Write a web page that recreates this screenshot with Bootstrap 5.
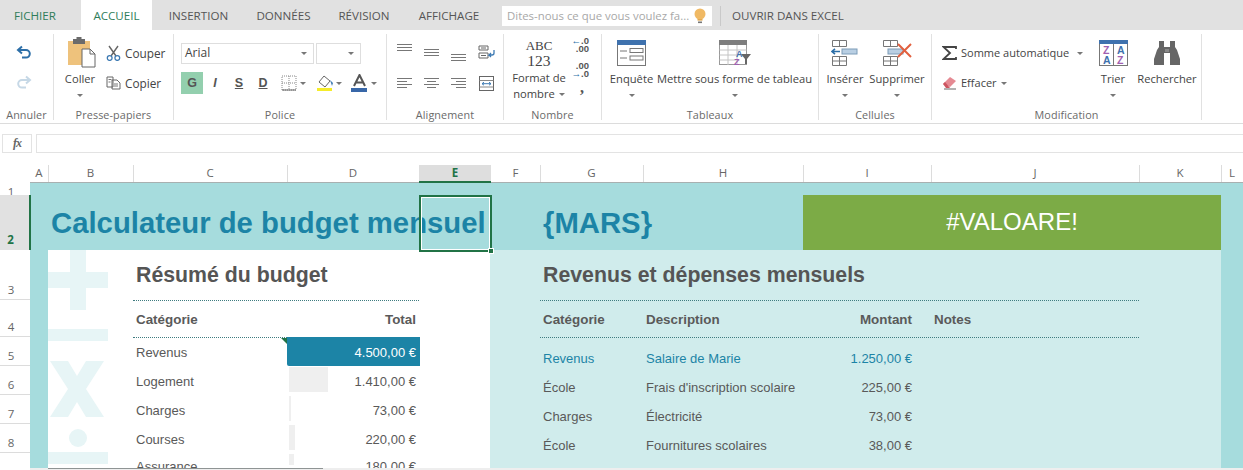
<!DOCTYPE html>
<html lang="fr">
<head>
<meta charset="utf-8">
<title>Calculateur de budget mensuel</title>
<link href="https://cdn.jsdelivr.net/npm/bootstrap@5.3.0/dist/css/bootstrap.min.css" rel="stylesheet">
<style>
html,body{margin:0;height:470px;overflow:hidden;background:#fff}
body{font-family:"Open Sans","Noto Sans",sans-serif;font-size:11.2px;color:#444;line-height:1.2}
svg{display:block;flex:none}
.tabbar{height:30px;background:#e1e1e1;color:#555}
.rtab{height:30px;text-align:center;line-height:31px;font-size:11.6px;white-space:nowrap}
.rtab-green{color:#2f7d5a}
.rtab-on{background:#fff;color:#2f7d5a}
.askbox{width:210px;height:20px;margin-left:10px;background:#fff;color:#a8a8a8;padding-left:5px;line-height:20px;font-size:11.4px;white-space:nowrap}
.tabsep{width:1px;height:20px;background:#c9c9c9;margin:0 11px 0 8px}
.ribbon{height:94px;border-bottom:1px solid #dcdcdc;padding-top:4px}
.rgroup{height:86px;border-right:1px solid #e1e1e1;position:relative;flex:none}
.rbody{height:74px}
.rlabel{height:12px;line-height:14px;font-size:10.8px;color:#6a6a6a;text-align:center;letter-spacing:.1px;white-space:nowrap}
.bigbtn{display:flex;flex-direction:column;align-items:center;flex:none;white-space:nowrap;padding-top:2px}
.bigicon{height:33px;display:flex;align-items:center;justify-content:center;margin-bottom:2px}
.btxt{height:16px;line-height:16px}
.caret-dn{width:0;height:0;border-left:3px solid transparent;border-right:3px solid transparent;border-top:3px solid #777;display:inline-block;flex:none}
.capbox{height:17px;display:flex;align-items:center;justify-content:center}
.smrow{height:30px;display:flex;align-items:center;white-space:nowrap;gap:4px}
.ddbox{height:21px;border:1px solid #dedede;background:#fff;display:flex;align-items:center;justify-content:space-between;padding:0 6px 0 3px;font-size:12px}
.fmtbtn{width:24px;height:22px;display:flex;align-items:center;justify-content:center;font-weight:700;font-size:12.5px;font-family:"Liberation Sans",sans-serif;color:#555}
.fmt-on{background:#93cfae;width:22px}
.algrid{display:grid;grid-template-columns:27px 27px 27px 29px;grid-auto-rows:30px;justify-items:center}
.al-a{margin-top:6px}
.al-c{margin-bottom:6px}
.abcstack{font-family:"Liberation Serif",serif;color:#444;text-align:center;font-size:13px;line-height:14px}
.abc-2{font-size:15.5px;line-height:15px}
.numdec{font-family:"Liberation Sans",sans-serif;font-size:9.5px;line-height:8px;text-align:right;color:#555;font-weight:700}
.arw{color:#2d6fa8}
.comma{font-family:"Liberation Serif",serif;font-size:16px;line-height:10px;text-align:center;padding-left:8px;margin-top:5px}
.somme-t{font-size:11px}
.coup-t{font-size:11.8px}
.fxrow{height:41px;padding-top:10px}
.fxbox{width:30px;height:19px;margin-left:2px;border:1px solid #e3e3e3;font-family:"Liberation Serif",serif;font-style:italic;font-weight:700;color:#666;text-align:center;line-height:17px;font-size:12px;letter-spacing:-1px}
.fxinput{flex:1;height:19px;margin-left:4px;border:1px solid #e3e3e3;border-right:0}
.sheet{display:grid;grid-template-columns:30px 18px 85px 154px 132px 72px 49px 103px 160px 128px 208px 82px 22px;grid-template-rows:18px 12px 55px 50px 37px 29px 29px 29px 29px 15px 2px;font-family:"Liberation Sans",sans-serif;color:#595959;font-size:13px}
.sheet>*{min-width:0;min-height:0}
.c1{grid-column:1}.c2{grid-column:2}.c3{grid-column:3}.c4{grid-column:4}.c5{grid-column:5}.c6{grid-column:6}.c7{grid-column:7}.c8{grid-column:8}.c9{grid-column:9}.c10{grid-column:10}.c11{grid-column:11}.c12{grid-column:12}.c13{grid-column:13}
.r0{grid-row:1}.r1{grid-row:2}.r2{grid-row:3}.r3{grid-row:4}.r4{grid-row:5}.r5{grid-row:6}.r6{grid-row:7}.r7{grid-row:8}.r8{grid-row:9}.r9{grid-row:10}.r10{grid-row:11}
.colhead{font-family:"Open Sans",sans-serif;font-size:11.5px;color:#666;text-align:center;line-height:16px;border-right:1px solid #dcdcdc;border-bottom:1px solid #a8b0b0;margin-right:-1px}
.colhead-on{background:#dedede;color:#217346;font-weight:700;border-bottom:2px solid #217346;border-right:0;line-height:15px;margin-right:0}
.rowhead{font-family:"Open Sans",sans-serif;font-size:11.5px;color:#666;border-bottom:1px solid #dcdcdc;width:30px;padding:0 8px 1px 0;display:flex;align-items:flex-end;justify-content:center;line-height:16px}
.rowhead-top{align-items:flex-start;overflow:hidden;padding:1px 8px 0 0;border-bottom:0}
.rowhead-on{background:#e1e1e1;color:#217346;font-weight:700;border-right:2px solid #217346;border-bottom:0;margin-right:-1px;width:31px;padding-bottom:2px}
.teal-bg{grid-column:2/14;grid-row:2/11;background:#a6dcdd}
.scrolllip{grid-column:2/14;grid-row:11;background:#eee}
.scrolllip-d{grid-column:3/5;grid-row:11;background:#8f9494;height:1px;margin-right:-36px}
.panel-w{grid-column:3/7;grid-row:4/11;background:#fff}
.panel-t{grid-column:7/13;grid-row:4/11;background:#d0ecec;margin-left:-1px}
.sbanner{grid-column:10/13;grid-row:3;background:#7cab46;color:#fff;font-size:24px;display:flex;align-items:center;justify-content:center}
.stitle{grid-row:3;color:#1c84a6;font-weight:700;font-size:29.3px;display:flex;align-items:center;white-space:nowrap;padding-left:3px}
.t1{grid-column:3/7}.t2{grid-column:8/10}
.selbox{grid-column:6;grid-row:3;border:2px solid #217346;margin-bottom:-2px;margin-right:-1px;position:relative;box-shadow:inset 0 0 0 1px #fff}
.selbox::after{content:"";position:absolute;right:-4px;bottom:-4px;width:6px;height:6px;background:#217346;border:1px solid #fff}
.wmark{grid-column:3;grid-row:4/11;overflow:hidden}
.h2cell{font-weight:700;font-size:21.3px;color:#555;grid-row:4;padding:13px 0 0 3px;white-space:nowrap}
.dots-bot{border-bottom:1px dotted #3f7c80;margin-bottom:-1px}
.th{font-weight:700;font-size:13.4px;color:#5a5a5a;display:flex;align-items:center;padding:3px 3px 0;white-space:nowrap;grid-row:5}
.endx{justify-content:flex-end}
.td{display:flex;align-items:center;padding:2px 3px 0;white-space:nowrap}
.td-b{display:flex;align-items:flex-end;padding:0 3px;white-space:nowrap;margin-bottom:-1px}
.mright{padding-right:19px}
.blue{color:#1c84a6}
.line-l{grid-column:4/6;grid-row:4}
.line-l2{grid-column:4/6;grid-row:5}
.line-r{grid-column:8/12;grid-row:4}
.line-r2{grid-column:8/12;grid-row:5}
.barblue{grid-column:5;grid-row:6;background:#1c84a6;margin-right:-1px;border-radius:0 0 0 2px}
.barwrap{grid-column:5;padding:1px 0 3px 2px}
.barfill{background:#efefef;height:100%}
.whitecell{color:#fff}
.tri{width:0;height:0;border-top:6px solid #217346;border-left:6px solid transparent;justify-self:end;margin-top:1px}
.clipb{overflow:hidden;align-items:flex-start;padding-top:6px}
</style>
</head>
<body>
<div class="tabbar d-flex">
  <div class="rtab rtab-green" style="width:81px;padding-right:11px">FICHIER</div>
  <div class="rtab rtab-on" style="width:71px">ACCUEIL</div>
  <div class="rtab" style="width:93px">INSERTION</div>
  <div class="rtab" style="width:77px">DONNÉES</div>
  <div class="rtab" style="width:84px">RÉVISION</div>
  <div class="rtab" style="width:86px">AFFICHAGE</div>
  <div class="d-flex" style="padding-top:6px">
    <div class="askbox d-flex justify-content-between">
      <span>Dites-nous ce que vous voulez fa...</span>
      <svg width="16" height="20" viewBox="0 0 16 20" class="me-1"><circle cx="8" cy="8" r="5.5" fill="#f0b964"/><rect x="5.5" y="13" width="5" height="1.6" fill="#e0a750"/><rect x="6" y="15.5" width="4" height="1.6" fill="#777"/></svg>
    </div>
    <div class="tabsep"></div>
  </div>
  <div class="rtab">OUVRIR DANS EXCEL</div>
</div>

<div class="ribbon d-flex">
  <!-- Annuler -->
  <div class="rgroup" style="width:54px">
    <div class="rbody d-flex flex-column align-items-center" style="padding-top:3px;padding-right:5px">
      <div class="smrow"><svg width="16" height="14" viewBox="0 0 16 14"><path d="M6 1.5 2 5l4 3.5M2.5 5H10a3.8 3.8 0 0 1 0 7.6H6" fill="none" stroke="#2d6fa8" stroke-width="2"/></svg></div>
      <div class="smrow"><svg width="16" height="14" viewBox="0 0 16 14"><path d="M10 1.5 14 5l-4 3.5M13.5 5H6a3.8 3.8 0 0 0 0 7.6h4" fill="none" stroke="#c6d8e6" stroke-width="2"/></svg></div>
    </div>
    <div class="rlabel">Annuler</div>
  </div>
  <!-- Presse-papiers -->
  <div class="rgroup" style="width:120px">
    <div class="rbody d-flex">
      <div class="bigbtn" style="width:52px">
        <div class="bigicon"><svg width="30" height="31" viewBox="0 0 30 31" style="margin-left:3px"><rect x="1" y="4" width="22" height="24" fill="#eec27c"/><rect x="6" y="2" width="12" height="5" fill="#6b6b6b"/><rect x="9.500" y="0" width="5" height="4" fill="#6b6b6b"/><path d="M15 12h8l5 5v13H15z" fill="#fff" stroke="#666"/><path d="M23 12v5h5" fill="none" stroke="#666"/></svg></div>
        <div class="btxt">Coller</div>
        <div class="capbox"><i class="caret-dn"></i></div>
      </div>
      <div style="padding-top:2px">
        <div class="smrow" style="margin-top:2px"><svg width="15" height="16" viewBox="0 0 15 16"><path d="M3 1l7 10M12 1 5 11" stroke="#666" stroke-width="1.4"/><circle cx="3.700" cy="13" r="2.400" fill="none" stroke="#3d7ab3" stroke-width="1.300"/><circle cx="11.300" cy="13" r="2.400" fill="none" stroke="#3d7ab3" stroke-width="1.300"/></svg><span class="coup-t">Couper</span></div>
        <div class="smrow"><svg width="15" height="14" viewBox="0 0 15 14"><path d="M1 1h6v10H1zM6 4h5l3 3v6H6z" fill="#fff" stroke="#666"/><path d="M8 8h4M8 10h4M2.500 3.500h3M2.500 6h2" stroke="#777"/></svg><span class="coup-t">Copier</span></div>
      </div>
    </div>
    <div class="rlabel">Presse-papiers</div>
  </div>
  <!-- Police -->
  <div class="rgroup" style="width:213px">
    <div class="rbody" style="padding:8px 0 0 7px">
      <div class="d-flex" style="gap:2px;margin-top:1px">
        <div class="ddbox" style="width:133px"><span>Arial</span><i class="caret-dn"></i></div>
        <div class="ddbox" style="width:45px"><span></span><i class="caret-dn"></i></div>
      </div>
      <div class="d-flex align-items-center" style="margin-top:8px">
        <div class="fmtbtn fmt-on">G</div>
        <div class="fmtbtn"><em>I</em></div>
        <div class="fmtbtn text-decoration-underline">S</div>
        <div class="fmtbtn text-decoration-underline">D</div>
        <svg width="16" height="16" viewBox="0 0 16 16" style="margin:0 3px 0 6px"><rect x="1" y="1" width="14" height="14" fill="none" stroke="#888" stroke-dasharray="1 1"/><path d="M8 1v14M1 8h14" stroke="#888" stroke-dasharray="1 1"/><path d="M1 15h14" stroke="#666"/></svg>
        <i class="caret-dn"></i>
        <svg width="18" height="18" viewBox="0 0 18 18" style="margin:0 2px 0 10px"><path d="M3 8l5-6 6 5-5 6z" fill="#fff" stroke="#666"/><path d="M14 6l3 3-1 3z" fill="#3d7ab3"/><rect x="1" y="14" width="15" height="3" fill="#f5ec2a"/></svg>
        <i class="caret-dn"></i>
        <svg width="17" height="18" viewBox="0 0 17 18" style="margin:0 3px 0 9px"><path d="M3 12 8.500 1 14 12M5 8.500h7" fill="none" stroke="#555" stroke-width="2"/><rect x="0" y="14" width="16" height="4" fill="#3867a8"/></svg>
        <i class="caret-dn"></i>
      </div>
    </div>
    <div class="rlabel">Police</div>
  </div>
  <!-- Alignement -->
  <div class="rgroup" style="width:117px">
    <div class="rbody" style="padding:4px 0 0 4px">
      <div class="algrid">
        <svg class="align-self-start al-a" width="15" height="8" viewBox="0 0 15 8"><path d="M0 .5h15M0 3.500h15M0 6.500h15" stroke="#777"/></svg>
        <svg class="align-self-center" width="15" height="8" viewBox="0 0 15 8"><path d="M0 .5h15M0 3.500h15M0 6.500h15" stroke="#777"/></svg>
        <svg class="align-self-end al-c" width="15" height="8" viewBox="0 0 15 8"><path d="M0 .5h15M0 3.500h15M0 6.500h15" stroke="#777"/></svg>
        <svg class="align-self-center" width="17" height="17" viewBox="0 0 17 17"><path d="M1 1h9v4H1zM1 8h9v5H1z" fill="none" stroke="#666"/><path d="M3 10.500h5M3 3h5" stroke="#666"/><path d="M16 5v3a2 2 0 0 1-2 2h-3l2-2m-2 2 2 2" fill="none" stroke="#3d7ab3" stroke-width="1.300"/></svg>
        <svg class="align-self-center" width="15" height="11" viewBox="0 0 15 11"><path d="M0 .5h15M0 3.500h10M0 6.500h15M0 9.500h10" stroke="#777"/></svg>
        <svg class="align-self-center" width="15" height="11" viewBox="0 0 15 11"><path d="M0 .5h15M3 3.500h9M0 6.500h15M3 9.500h9" stroke="#777"/></svg>
        <svg class="align-self-center" width="15" height="11" viewBox="0 0 15 11"><path d="M0 .5h15M5 3.500h10M0 6.500h15M5 9.500h10" stroke="#777"/></svg>
        <svg class="align-self-center" width="15" height="15" viewBox="0 0 15 15"><rect x=".5" y=".5" width="14" height="14" fill="none" stroke="#666"/><path d="M.5 4.500h14M.5 11h14" stroke="#888"/><path d="M3 7.700h9M3 7.700l2-1.500M3 7.700l2 1.500M12 7.700l-2-1.500M12 7.700l-2 1.500" stroke="#3d7ab3"/></svg>
      </div>
    </div>
    <div class="rlabel">Alignement</div>
  </div>
  <!-- Nombre -->
  <div class="rgroup" style="width:98px">
    <div class="rbody d-flex" style="padding-left:7px">
      <div class="bigbtn" style="width:56px;padding-top:5px">
        <div class="abcstack">ABC<div class="abc-2">123</div></div>
        <div class="btxt" style="margin-top:2px">Format de</div>
        <div class="btxt d-flex align-items-center">nombre<i class="caret-dn ms-1"></i></div>
      </div>
      <div class="numdec" style="width:22px;padding-top:3px">
        <div><span class="arw">←</span>.0<br>.00</div>
        <div style="margin-top:9px">.00<br><span class="arw">→</span>.0</div>
        <div class="comma">,</div>
      </div>
    </div>
    <div class="rlabel">Nombre</div>
  </div>
  <!-- Tableaux -->
  <div class="rgroup" style="width:217px">
    <div class="rbody d-flex" style="padding-left:6px">
      <div class="bigbtn" style="width:47px">
        <div class="bigicon"><svg width="30" height="26" viewBox="0 0 30 26"><rect x=".5" y=".5" width="28" height="25" fill="#fff" stroke="#777"/><rect width="29" height="5" fill="#3f72ae"/><path d="M3 11h7M3 18h7" stroke="#777"/><rect x="13" y="8.500" width="13" height="4" fill="none" stroke="#777"/><rect x="13" y="16" width="13" height="4" fill="none" stroke="#777"/></svg></div>
        <div class="btxt">Enquête</div>
        <div class="capbox"><i class="caret-dn"></i></div>
      </div>
      <div class="bigbtn" style="width:157px;margin-left:1px">
        <div class="bigicon"><svg width="32" height="26" viewBox="0 0 32 26"><rect x=".5" y=".5" width="27" height="24" fill="#fff" stroke="#999"/><rect width="28" height="5" fill="#7d7d7d"/><path d="M.5 10h27M.5 15h27M.5 20h20M9 5v20M18 5v20" stroke="#c4c4c4"/><text x="17" y="17" font-size="9" font-weight="700" fill="#3f72ae" font-family="Liberation Sans">A</text><text x="15" y="25" font-size="9" font-weight="700" fill="#a060b0" font-family="Liberation Sans">Z</text><path d="M22 14h10l-4 5v5h-2v-5z" fill="#666"/></svg></div>
        <div class="btxt">Mettre sous forme de tableau</div>
        <div class="capbox"><i class="caret-dn"></i></div>
      </div>
    </div>
    <div class="rlabel">Tableaux</div>
  </div>
  <!-- Cellules -->
  <div class="rgroup" style="width:113px">
    <div class="rbody d-flex" style="padding-left:7px">
      <div class="bigbtn" style="width:38px">
        <div class="bigicon"><svg width="28" height="26" viewBox="0 0 28 26"><path d="M1.500.5h14v6h-14zM8.500.5v6M1.500 16.500h14v9h-14zM8.500 16.500v9M1.500 21h14" fill="none" stroke="#777"/><rect x="11" y="9" width="15" height="5" fill="#b9cfe3" stroke="#7d9cb8"/><path d="M9 11.500H1M4 8.800 1 11.500 4 14.200" fill="none" stroke="#2d6fa8" stroke-width="1.600"/></svg></div>
        <div class="btxt">Insérer</div>
        <div class="capbox"><i class="caret-dn"></i></div>
      </div>
      <div class="bigbtn" style="width:58px;margin-left:4px">
        <div class="bigicon"><svg width="30" height="26" viewBox="0 0 30 26"><path d="M1.500.5h14v6h-14zM8.500.5v6M1.500 16.500h14v9h-14zM8.500 16.500v9M1.500 21h14" fill="none" stroke="#777"/><rect x="6" y="9" width="15" height="5" fill="#b9cfe3" stroke="#7d9cb8"/><path d="M16 4l13 13M29 4 16 17" stroke="#e2603f" stroke-width="2"/></svg></div>
        <div class="btxt">Supprimer</div>
        <div class="capbox"><i class="caret-dn"></i></div>
      </div>
    </div>
    <div class="rlabel">Cellules</div>
  </div>
  <!-- Modification -->
  <div class="rgroup" style="width:270px">
    <div class="rbody d-flex">
      <div style="padding:4px 0 0 10px;width:155px">
        <div class="smrow"><svg width="15" height="14" viewBox="0 0 15 14"><path d="M14 3V1H1.500L8 7 1.500 13H14v-2" fill="none" stroke="#444" stroke-width="1.800"/></svg><span class="somme-t">Somme automatique</span><i class="caret-dn ms-1"></i></div>
        <div class="smrow"><svg width="15" height="14" viewBox="0 0 15 14"><path d="M1 8 8 1l6 4-6 6z" fill="#e58a93"/><path d="M1 8l3 4h4L3 6z" fill="#cc5560"/><path d="M2 13h12" stroke="#666"/></svg><span class="somme-t">Effacer</span><i class="caret-dn"></i></div>
      </div>
      <div class="bigbtn" style="width:38px;margin-left:7px">
        <div class="bigicon"><svg width="29" height="26" viewBox="0 0 29 26"><rect x=".5" y=".5" width="28" height="25" fill="#fff" stroke="#777"/><rect width="29" height="4" fill="#3f72ae"/><path d="M14.500 4v22" stroke="#777"/><g font-family="Liberation Sans" font-size="10.500" font-weight="700"><text x="4" y="14" fill="#a060b0">Z</text><text x="4" y="24" fill="#3f72ae">A</text><text x="18" y="14" fill="#3f72ae">A</text><text x="18" y="24" fill="#a060b0">Z</text></g></svg></div>
        <div class="btxt">Trier</div>
        <div class="capbox"><i class="caret-dn"></i></div>
      </div>
      <div class="bigbtn" style="width:60px;margin-left:5px">
        <div class="bigicon"><svg width="28" height="26" viewBox="0 0 28 26"><path d="M6 1h5v6h6V1h5v6l2 3 3 9v6H17V13h-6v12H1v-6l3-9 2-3z" fill="#666"/><path d="M12 9h4v3h-4z" fill="#8a8a8a"/></svg></div>
        <div class="btxt">Rechercher</div>
      </div>
    </div>
    <div class="rlabel">Modification</div>
  </div>
</div>

<div class="fxrow d-flex">
  <div class="fxbox">fx</div>
  <div class="fxinput"></div>
</div>

<div class="sheet">
  <div class="teal-bg"></div>
  <div class="panel-w"></div>
  <div class="panel-t"></div>
  <div class="scrolllip"></div>
  <div class="scrolllip-d"></div>

  <div class="colhead c1 r0 border-bottom-0 border-end-0"></div>
  <div class="colhead c2 r0">A</div><div class="colhead c3 r0">B</div><div class="colhead c4 r0">C</div><div class="colhead c5 r0">D</div>
  <div class="colhead colhead-on c6 r0">E</div>
  <div class="colhead c7 r0">F</div><div class="colhead c8 r0">G</div><div class="colhead c9 r0">H</div><div class="colhead c10 r0">I</div><div class="colhead c11 r0">J</div><div class="colhead c12 r0">K</div><div class="colhead c13 r0">L</div>

  <div class="rowhead rowhead-top c1 r1">1</div>
  <div class="rowhead rowhead-on c1 r2">2</div>
  <div class="rowhead c1 r3">3</div>
  <div class="rowhead c1 r4">4</div>
  <div class="rowhead c1 r5">5</div>
  <div class="rowhead c1 r6">6</div>
  <div class="rowhead c1 r7">7</div>
  <div class="rowhead c1 r8">8</div>

  <div class="stitle t1">Calculateur de budget mensuel</div>
  <div class="stitle t2">{MARS}</div>
  <div class="sbanner">#VALOARE!</div>
  <div class="selbox"></div>

  <div class="wmark"><svg width="85" height="220" viewBox="0 0 85 220"><g fill="#e7f5f6"><path d="M22 0h16v22h22v16H38v22H22V38H0V22h22z"/><rect y="79" width="60" height="12"/><path d="M2 111h18l9 15 9-15h18l-18 28 18 28H38l-9-15-9 15H2l18-28z"/><circle cx="30" cy="188" r="9"/><rect y="202" width="60" height="12"/></g></svg></div>

  <div class="h2cell c4">Résumé du budget</div>
  <div class="line-l dots-bot"></div>
  <div class="th c4">Catégorie</div>
  <div class="th c5 endx">Total</div>
  <div class="line-l2 dots-bot"></div>

  <div class="tri c4 r5"></div>
  <div class="barblue"></div>
  <div class="td c4 r5">Revenus</div><div class="td c5 r5 endx whitecell">4.500,00 €</div>
  <div class="barwrap r6"><div class="barfill" style="width:39px"></div></div>
  <div class="td c4 r6">Logement</div><div class="td c5 r6 endx">1.410,00 €</div>
  <div class="barwrap r7"><div class="barfill" style="width:2px"></div></div>
  <div class="td c4 r7">Charges</div><div class="td c5 r7 endx">73,00 €</div>
  <div class="barwrap r8"><div class="barfill" style="width:6px"></div></div>
  <div class="td c4 r8">Courses</div><div class="td c5 r8 endx">220,00 €</div>
  <div class="barwrap r9"><div class="barfill" style="width:5px"></div></div>
  <div class="td c4 r9 clipb">Assurance</div><div class="td c5 r9 endx clipb">180,00 €</div>

  <div class="h2cell c8">Revenus et dépenses mensuels</div>
  <div class="line-r dots-bot"></div>
  <div class="th c8">Catégorie</div><div class="th c9">Description</div><div class="th c10 endx mright">Montant</div><div class="th c11">Notes</div>
  <div class="line-r2 dots-bot"></div>

  <div class="td-b c8 r5 blue">Revenus</div><div class="td-b c9 r5 blue">Salaire de Marie</div><div class="td-b c10 r5 blue endx mright">1.250,00 €</div>
  <div class="td-b c8 r6">École</div><div class="td-b c9 r6">Frais d'inscription scolaire</div><div class="td-b c10 r6 endx mright">225,00 €</div>
  <div class="td-b c8 r7">Charges</div><div class="td-b c9 r7">Électricité</div><div class="td-b c10 r7 endx mright">73,00 €</div>
  <div class="td-b c8 r8">École</div><div class="td-b c9 r8">Fournitures scolaires</div><div class="td-b c10 r8 endx mright">38,00 €</div>
</div>
</body>
</html>
